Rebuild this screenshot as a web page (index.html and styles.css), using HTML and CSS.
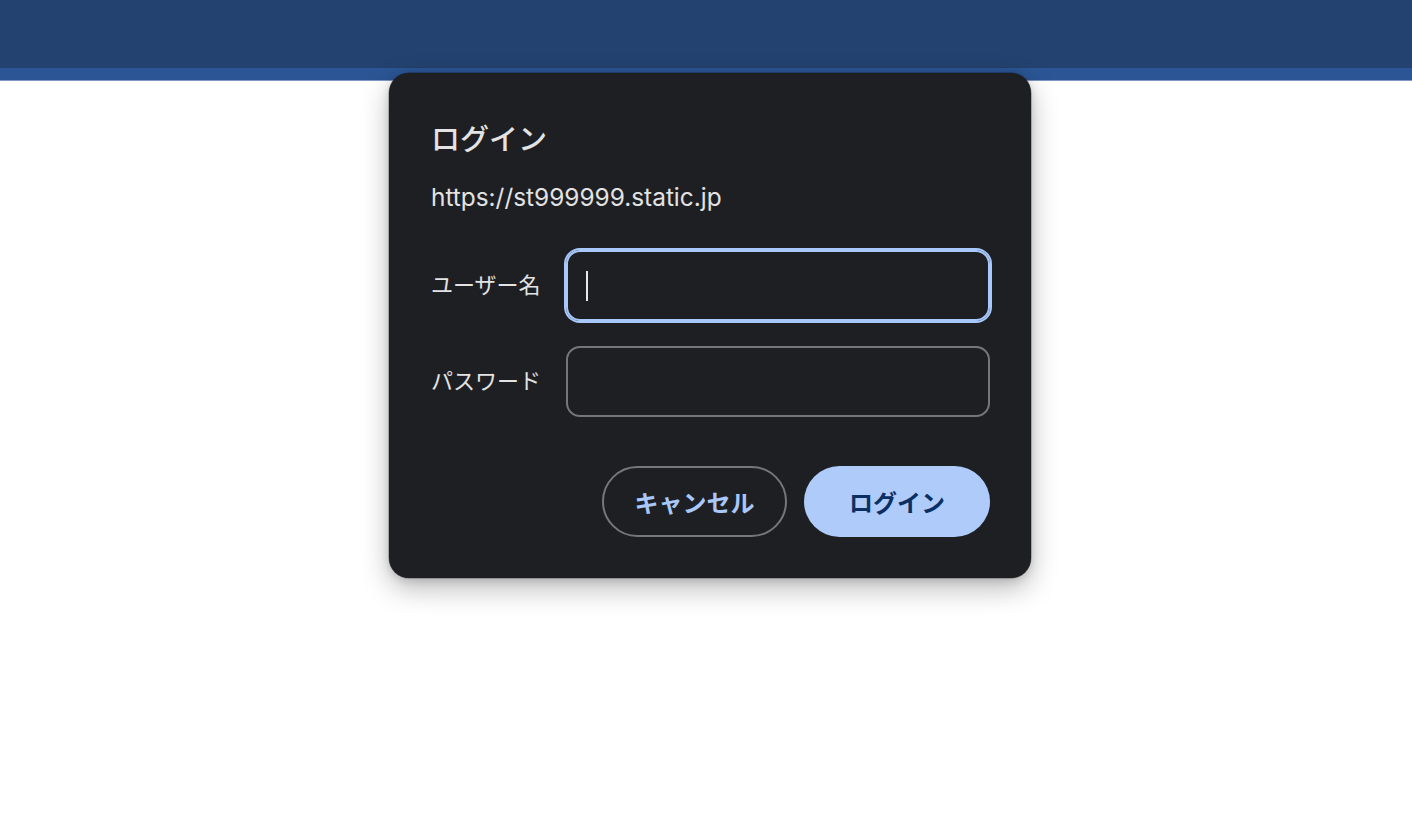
FILE: index.html
```html
<!DOCTYPE html>
<html lang="ja">
<head>
<meta charset="utf-8">
<title>ログイン</title>
<link rel="stylesheet" href="styles.css">
</head>
<body>
<header class="topbar">
  <div class="topbar-main"></div>
  <div class="topbar-band"></div>
  <div class="topbar-line"></div>
</header>
<main class="page"></main>
<div class="dialog" role="dialog" aria-labelledby="dlg-title">
  <h1 class="title" id="dlg-title">ログイン</h1>
  <p class="origin">https://st999999.static.jp</p>
  <div class="fields">
    <label class="label">ユーザー名</label>
    <div class="field focused"><span class="caret"></span></div>
    <label class="label">パスワード</label>
    <div class="field"></div>
  </div>
  <div class="actions">
    <button class="btn btn-cancel" type="button">キャンセル</button>
    <button class="btn btn-primary" type="button">ログイン</button>
  </div>
</div>
</body>
</html>
```
FILE: styles.css
```css
html, body {
  margin: 0;
  padding: 0;
  background: #ffffff;
  height: 100%;
}
body {
  font-family: Inter, "Noto Sans CJK JP", sans-serif;
  overflow: hidden;
}
.topbar {
  display: flex;
  flex-direction: column;
}
.topbar-main {
  height: 68px;
  background: #24426f;
}
.topbar-band {
  height: 12px;
  background: #2b5594;
}
.topbar-line {
  height: 1px;
  background: #7d98c2;
}
.dialog {
  position: absolute;
  top: 73px;
  left: 389px;
  width: 559px;
  padding: 46px 41px 41px 42px;
  background: #1e1f23;
  border-radius: 20px;
  box-shadow: 0 0 0 0.5px rgba(0,0,0,0.4), 0 10px 28px rgba(0,0,0,0.28), 0 2px 8px rgba(0,0,0,0.15);
  color: #e3e3e3;
  display: flex;
  flex-direction: column;
}
.title {
  margin: 0;
  font-family: "Noto Sans CJK JP", sans-serif;
  font-size: 29px;
  line-height: 36px;
  font-weight: 500;
  color: #e3e3e3;
}
.origin {
  margin: 26px 0 0;
  font-family: Inter, "Noto Sans CJK JP", sans-serif;
  font-size: 24.4px;
  line-height: 32px;
  color: #e3e3e3;
}
.fields {
  margin-top: 37px;
  display: grid;
  grid-template-columns: 135px 424px;
  row-gap: 25px;
  align-items: center;
}
.label {
  font-family: "Noto Sans CJK JP", sans-serif;
  font-size: 22px;
  line-height: 30px;
  padding-bottom: 5px;
  color: #e3e3e3;
  white-space: nowrap;
}
.field {
  box-sizing: border-box;
  height: 71px;
  border: 2px solid #75767a;
  border-radius: 14px;
  display: flex;
  align-items: center;
  padding-left: 18px;
}
.field.focused {
  border-color: #a8c7fa;
  box-shadow: 0 0 0 2px #a8c7fa;
}
.caret {
  width: 2px;
  height: 30px;
  background: #e8e8e8;
}
.actions {
  margin-top: 49px;
  display: flex;
  justify-content: flex-end;
  gap: 17px;
}
.btn {
  box-sizing: border-box;
  height: 71px;
  border-radius: 36px;
  font-family: "Noto Sans CJK JP", sans-serif;
  font-size: 24px;
  font-weight: 700;
  padding: 0;
  cursor: pointer;
}
.btn-cancel {
  width: 185px;
  background: transparent;
  border: 2px solid #75777d;
  color: #a8c7fa;
}
.btn-primary {
  width: 186px;
  background: #aecbfa;
  border: none;
  color: #0b2f63;
}
```
